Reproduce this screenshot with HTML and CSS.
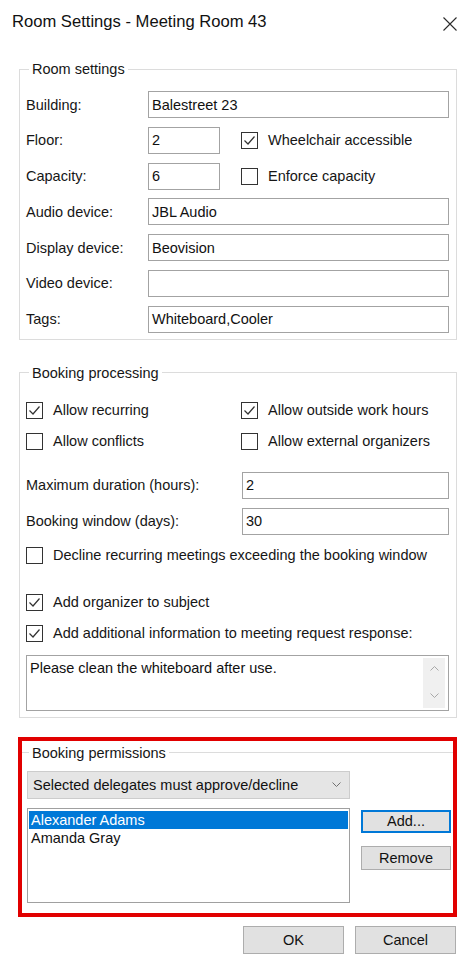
FILE: index.html
```html
<!DOCTYPE html>
<html lang="en">
<head>
<meta charset="utf-8">
<title>Room Settings - Meeting Room 43</title>
<link rel="stylesheet" href="styles.css">
</head>
<body>
<div class="window">
  <div class="titlebar">
    <span class="title">Room Settings - Meeting Room 43</span>
    <svg class="close" width="14" height="14" viewBox="0 0 14 14"><path d="M0.5 0.5 L13.5 13.5 M13.5 0.5 L0.5 13.5" stroke="#2b2b2b" stroke-width="1.1" fill="none"/></svg>
  </div>
  <div class="content">
    <fieldset class="group g1">
      <legend>Room settings</legend>
      <div class="rows">
        <div class="row"><span class="lbl">Building:</span><div class="field">Balestreet 23</div></div>
        <div class="row"><span class="lbl">Floor:</span><div class="field short">2</div>
          <div class="check ml21"><span class="box"><svg width="15" height="15" viewBox="0 0 15 15"><polyline points="2.5,7.5 6,11 12.5,3.5" fill="none" stroke="#333" stroke-width="1.2"/></svg></span>Wheelchair accessible</div></div>
        <div class="row"><span class="lbl">Capacity:</span><div class="field short">6</div>
          <div class="check ml21"><span class="box"></span>Enforce capacity</div></div>
        <div class="row"><span class="lbl">Audio device:</span><div class="field">JBL Audio</div></div>
        <div class="row"><span class="lbl">Display device:</span><div class="field">Beovision</div></div>
        <div class="row"><span class="lbl">Video device:</span><div class="field"></div></div>
        <div class="row"><span class="lbl">Tags:</span><div class="field">Whiteboard,Cooler</div></div>
      </div>
    </fieldset>

    <fieldset class="group g2">
      <legend>Booking processing</legend>
      <div class="checkgrid">
        <div class="check"><span class="box"><svg width="15" height="15" viewBox="0 0 15 15"><polyline points="2.5,7.5 6,11 12.5,3.5" fill="none" stroke="#333" stroke-width="1.2"/></svg></span>Allow recurring</div>
        <div class="check"><span class="box"><svg width="15" height="15" viewBox="0 0 15 15"><polyline points="2.5,7.5 6,11 12.5,3.5" fill="none" stroke="#333" stroke-width="1.2"/></svg></span>Allow outside work hours</div>
        <div class="check"><span class="box"></span>Allow conflicts</div>
        <div class="check"><span class="box"></span>Allow external organizers</div>
      </div>
      <div class="row mt22"><span class="lbl wide">Maximum duration (hours):</span><div class="field">2</div></div>
      <div class="row mt9"><span class="lbl wide">Booking window (days):</span><div class="field">30</div></div>
      <div class="check mt12"><span class="box"></span>Decline recurring meetings exceeding the booking window</div>
      <div class="check mt30"><span class="box"><svg width="15" height="15" viewBox="0 0 15 15"><polyline points="2.5,7.5 6,11 12.5,3.5" fill="none" stroke="#333" stroke-width="1.2"/></svg></span>Add organizer to subject</div>
      <div class="check mt14"><span class="box"><svg width="15" height="15" viewBox="0 0 15 15"><polyline points="2.5,7.5 6,11 12.5,3.5" fill="none" stroke="#333" stroke-width="1.2"/></svg></span>Add additional information to meeting request response:</div>
      <div class="memo">
        <div class="memo-text">Please clean the whiteboard after use.</div>
        <div class="scroll">
          <svg width="9" height="5" viewBox="0 0 9 5"><polyline points="0.5,4.5 4.5,0.5 8.5,4.5" fill="none" stroke="#a8a8a8" stroke-width="1"/></svg>
          <svg width="9" height="5" viewBox="0 0 9 5"><polyline points="0.5,0.5 4.5,4.5 8.5,0.5" fill="none" stroke="#a8a8a8" stroke-width="1"/></svg>
        </div>
      </div>
    </fieldset>

    <div class="highlight">
      <fieldset class="group g3">
        <legend>Booking permissions</legend>
        <div class="combo"><span>Selected delegates must approve/decline</span>
          <svg width="9" height="5" viewBox="0 0 9 5"><polyline points="0.5,0.5 4.5,4.5 8.5,0.5" fill="none" stroke="#707070" stroke-width="1"/></svg>
        </div>
        <div class="perm">
          <div class="listbox">
            <div class="item selected">Alexander Adams</div>
            <div class="item">Amanda Gray</div>
          </div>
          <div class="side">
            <div class="btn focused">Add...</div>
            <div class="btn remove">Remove</div>
          </div>
        </div>
      </fieldset>
    </div>

    <div class="footer">
      <div class="btn big">OK</div>
      <div class="btn big">Cancel</div>
    </div>
  </div>
</div>
</body>
</html>
```

FILE: styles.css
```css
* { box-sizing: border-box; }

html, body {
  margin: 0;
  padding: 0;
  background: #ffffff;
}

body {
  font-family: "Liberation Sans", Arial, sans-serif;
  font-size: 14.5px;
  color: #161616;
}

.window {
  width: 474px;
  height: 974px;
  background: #ffffff;
  display: flex;
  flex-direction: column;
}

.titlebar {
  height: 44px;
  display: flex;
  align-items: center;
  justify-content: space-between;
  padding: 0 17px 0 12px;
}

.title {
  font-size: 16.6px;
  color: #111;
  line-height: 20px;
}

.close {
  margin-top: 3px;
}

.content {
  padding: 0 17px 0 18px;
  display: flex;
  flex-direction: column;
}

.group {
  margin: 0 0 0 1px;
  border: 1px solid #dcdcdc;
  min-width: 0;
}

.group legend {
  padding: 0 3px;
  margin-left: 3px;
  line-height: 18px;
  color: #161616;
}

.g1 {
  margin-top: 16px;
  padding: 13px 7px 6px 6px;
}

.rows {
  display: flex;
  flex-direction: column;
  gap: 8.8px;
}

.row {
  display: flex;
  align-items: center;
  height: 27px;
}

.lbl {
  width: 122px;
  flex: none;
}

.lbl.wide {
  width: 216px;
}

.field {
  flex: 1;
  height: 27px;
  border: 1px solid #a3a3a3;
  background: #fff;
  padding: 0 3px;
  display: flex;
  align-items: center;
  color: #111;
}

.field.short {
  flex: none;
  width: 72px;
}

.check {
  display: flex;
  align-items: center;
  gap: 10px;
  height: 17px;
  line-height: 17px;
  white-space: nowrap;
}

.box {
  width: 17px;
  height: 17px;
  flex: none;
  border: 1px solid #333;
  background: #fff;
  display: flex;
  align-items: center;
  justify-content: center;
}

.ml21 { margin-left: 21px; }
.mt9 { margin-top: 9px; }
.mt12 { margin-top: 12px; }
.mt14 { margin-top: 14px; }
.mt22 { margin-top: 22px; }
.mt30 { margin-top: 30px; }

.g2 {
  margin-top: 24px;
  padding: 20px 7px 6px 6px;
}

.checkgrid {
  display: grid;
  grid-template-columns: 215px 1fr;
  row-gap: 14px;
}

.memo {
  margin-top: 13px;
  height: 56px;
  border: 1px solid #a3a3a3;
  display: flex;
  background: #fff;
}

.memo-text {
  flex: 1;
  padding: 4px 3px;
  line-height: 17px;
  color: #111;
}

.scroll {
  width: 22px;
  margin: 2px 3px 2px 0;
  background: #f0f0f0;
  display: flex;
  flex-direction: column;
  align-items: center;
  justify-content: space-between;
  padding: 8px 0 10px;
}

.highlight {
  margin-top: 19px;
  border: 4px solid #e10000;
}

.g3 {
  margin: 3px 0 0 0;
  border: none;
  border-top: 1px solid #dcdcdc;
  padding: 9px 2px 10px 5px;
}

.g3 legend {
  margin-left: 2px;
}

.combo {
  width: 323px;
  height: 28px;
  background: #e5e5e5;
  border: 1px solid #cccccc;
  display: flex;
  align-items: center;
  justify-content: space-between;
  padding: 0 8px 0 5px;
  color: #111;
}

.perm {
  margin-top: 9px;
  display: flex;
  gap: 11px;
}

.listbox {
  width: 323px;
  height: 95px;
  border: 1px solid #a0a0a0;
  background: #fff;
  padding: 2px 1px;
}

.item {
  height: 18px;
  line-height: 18px;
  padding-left: 2px;
  color: #111;
}

.item.selected {
  background: #0078d7;
  color: #fff;
}

.side {
  display: flex;
  flex-direction: column;
  gap: 13px;
  padding-top: 2px;
}

.btn {
  width: 90px;
  height: 23px;
  background: #e1e1e1;
  border: 1px solid #adadad;
  display: flex;
  align-items: center;
  justify-content: center;
  color: #111;
}

.btn.focused {
  border: 2px solid #0078d7;
}

.btn.remove {
  height: 24px;
}

.footer {
  margin-top: 9px;
  margin-right: 1px;
  display: flex;
  justify-content: flex-end;
  gap: 11px;
}

.btn.big {
  width: 101px;
  height: 28px;
}
```
